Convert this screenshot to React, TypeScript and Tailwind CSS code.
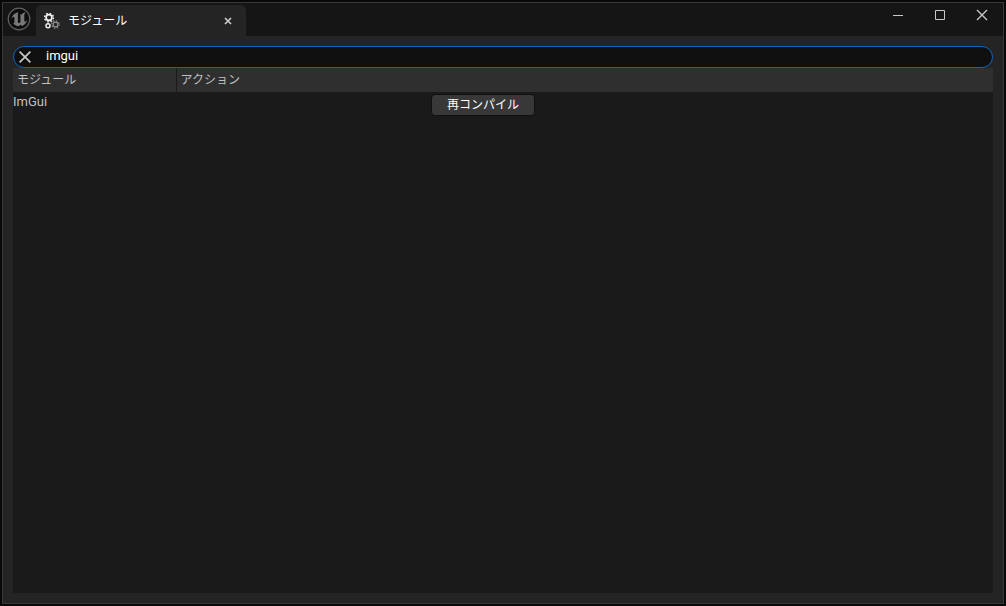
import { useState } from "react";

const modules = ["ImGui"];

function UnrealLogo() {
  return (
    <svg viewBox="0 0 24 24" className="h-6 w-6 shrink-0" aria-hidden="true">
      <circle cx="12" cy="12" r="10.8" fill="#0d0d0d" stroke="#606060" strokeWidth="1.2" />
      <path
        fill="#777777"
        d="M11.5 5C8 5.8 5 8.2 4.2 12c1-1.500 1.800-2.200 2.500-2.200.5 0 .7.3.7.9v4.600c0 .8-.4 1.200-1.300 1 1.300 1.700 3.200 2.800 5.700 3l1.700-1.500 1.700 1.100c2.300-1 4.200-3 5-6-1 1.200-1.700 1.700-2.300 1.700-.4 0-.6-.2-.6-.7V8.200c0-1.100.7-2.200 1.700-3.200-2 .5-3.800 1.500-5 2.800-.3-.3-.7-.5-1.200-.5.4.4.6.8.6 1.500v6.400c-.4.5-.9.8-1.500.8-.7 0-1-.4-1-1.200V7.200c0-.9.2-1.600.6-2.200z"
      />
    </svg>
  );
}

function GearsIcon() {
  return (
    <svg viewBox="0 0 16 16" className="h-4 w-4 shrink-0" fill="none" aria-hidden="true">
      <circle cx="5" cy="4.5" r="2.9" stroke="#f0f0f0" strokeWidth="1.7" />
      <circle cx="5" cy="4.5" r="4.4" stroke="#f0f0f0" strokeWidth="1.5" strokeDasharray="1.7 1.756" />
      <circle cx="4" cy="12.8" r="2" stroke="#f0f0f0" strokeWidth="1.5" />
      <circle cx="11.5" cy="11.5" r="2.4" stroke="#909090" strokeWidth="1.2" />
      <circle cx="11.5" cy="11.5" r="3.7" stroke="#909090" strokeWidth="1.3" strokeDasharray="1.4 1.506" />
    </svg>
  );
}

function TitleBar() {
  return (
    <header className="flex h-[33px] shrink-0 items-start bg-[#151515]">
      <div className="flex h-8 w-[33px] items-center justify-center pr-px">
        <UnrealLogo />
      </div>
      <div className="mt-0.5 flex h-[31px] w-[210px] items-center rounded-t-[5px] bg-[#242424] pr-3 pl-2 text-white">
        <GearsIcon />
        <h1 className="ml-2 flex-1 text-xs">モジュール</h1>
        <button type="button" aria-label="タブを閉じる" className="flex h-3 w-3 items-center justify-center text-[#c8c8c8]">
          <svg viewBox="0 0 8 8" className="h-2 w-2" stroke="currentColor" strokeWidth="1.7">
            <path d="M1 1l6 6M7 1L1 7" />
          </svg>
        </button>
      </div>
      <div className="ml-auto flex text-[#c8c8c8]">
        <button type="button" aria-label="最小化" className="flex h-6 w-[42px] items-center justify-center">
          <svg viewBox="0 0 10 10" className="h-2.5 w-2.5" stroke="currentColor">
            <path d="M0 5.5h10" />
          </svg>
        </button>
        <button type="button" aria-label="最大化" className="flex h-6 w-[42px] items-center justify-center">
          <svg viewBox="0 0 10 10" className="h-2.5 w-2.5" stroke="currentColor" fill="none">
            <path d="M.5.5h9v9h-9z" />
          </svg>
        </button>
        <button type="button" aria-label="閉じる" className="flex h-6 w-[42px] items-center justify-center">
          <svg viewBox="0 0 12 12" className="h-3 w-3" stroke="currentColor" strokeWidth="1.4">
            <path d="M1 1l10 10M11 1L1 11" />
          </svg>
        </button>
      </div>
    </header>
  );
}

export default function App() {
  const [filter, setFilter] = useState("imgui");

  const visible = modules.filter((name) =>
    name.toLowerCase().includes(filter.toLowerCase())
  );

  return (
    <div className="h-screen bg-[#080808] p-0.5 font-['Roboto','Noto_Sans_CJK_JP',sans-serif] text-[13px]">
      <div className="flex h-full flex-col border border-[#383838] bg-[#242424]">
        <TitleBar />

        <main className="flex min-h-0 flex-1 flex-col p-2.5">
          {/* Search */}
          <div className="flex h-[22px] shrink-0 items-center rounded-full border border-[#0b66c3] bg-[#0f0f0f]">
            <button
              type="button"
              aria-label="検索をクリア"
              onClick={() => setFilter("")}
              className="flex w-[22px] items-center justify-center text-[#c8c8c8]"
            >
              <svg viewBox="0 0 12 12" className="h-3 w-3" stroke="currentColor" strokeWidth="1.7">
                <path d="M.6.6l10.8 10.8M11.4.6L.6 11.4" />
              </svg>
            </button>
            <input
              type="text"
              aria-label="検索"
              value={filter}
              onChange={(e) => setFilter(e.target.value)}
              className="ml-2.5 h-full flex-1 bg-transparent pb-1 text-white outline-none"
            />
          </div>

          {/* Module list */}
          <div className="min-h-0 flex-1 overflow-auto bg-[#1a1a1a]">
            <table className="w-full table-fixed text-left text-[#c0c0c0]">
              <thead className="bg-[#2f2f2f] text-xs">
                <tr className="h-6">
                  <th className="w-[163px] border-r border-[#1a1a1a] px-1 font-normal">モジュール</th>
                  <th className="px-1 font-normal">アクション</th>
                </tr>
              </thead>
              <tbody>
                {visible.map((name) => (
                  <tr key={name} className="align-top">
                    <td className="leading-5">{name}</td>
                    <td className="pt-0.5 pl-[255px]">
                      <button
                        type="button"
                        className="h-[22px] w-26 rounded border border-[#101010] bg-[#383838] text-xs text-white"
                      >
                        再コンパイル
                      </button>
                    </td>
                  </tr>
                ))}
              </tbody>
            </table>
          </div>
        </main>
      </div>
    </div>
  );
}
